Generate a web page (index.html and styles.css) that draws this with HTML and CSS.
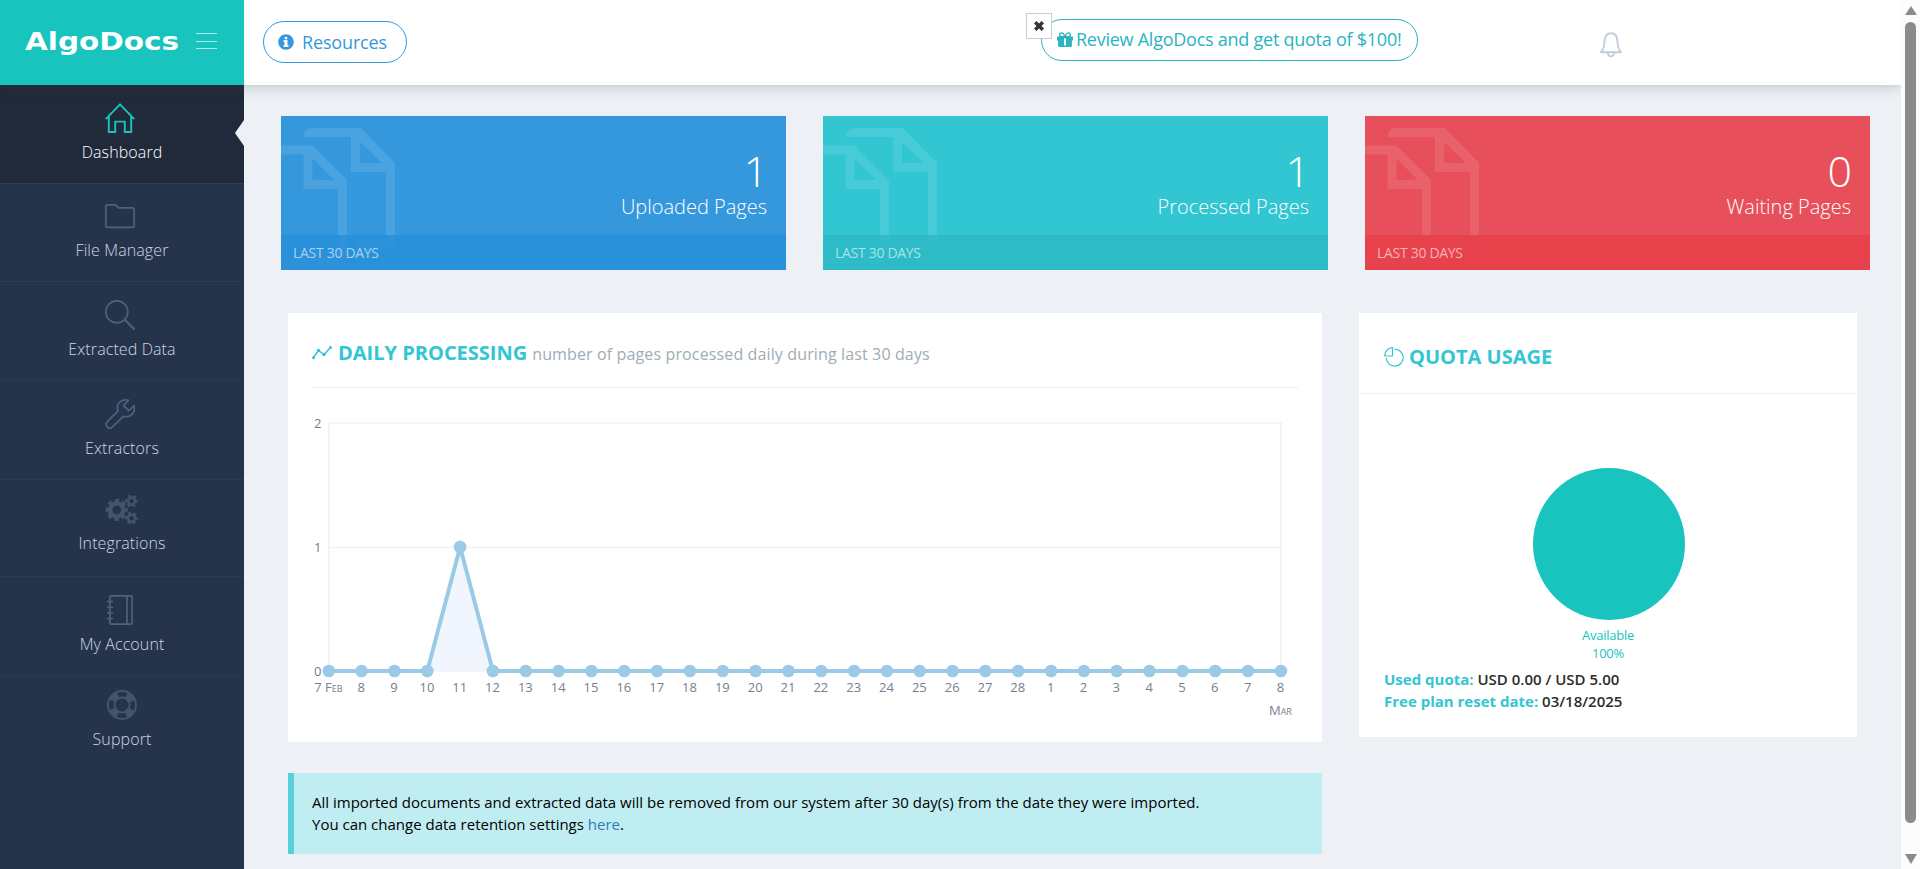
FILE: index.html
```html
<!DOCTYPE html>
<html lang="en">
<head>
<meta charset="utf-8">
<title>AlgoDocs - Dashboard</title>
<link rel="stylesheet" href="styles.css">
</head>
<body>
<svg class="defs" width="0" height="0">
  <symbol id="docs" viewBox="0 0 114 154">
    <path fill-rule="evenodd" d="M0 29.5H31.5L66 64V142Q66 151 57 151H0V142H53Q57 142 57 138V73H22.5V38.5H0ZM31.5 42.5V64H53ZM22.5 21Q22.5 12 31.5 12H80L114 47V125Q114 134 105 134H74.5V125H101Q105 125 105 121V56H70V21H22.5ZM79 26V47H101Z"/>
  </symbol>
</svg>
<div class="app">
  <div class="page">
    <header class="header">
      <div class="brand">
        <svg class="logo" width="156" height="30" viewBox="0 0 156 30"><text x="1" y="24" textLength="154" lengthAdjust="spacingAndGlyphs">AlgoDocs</text></svg>
        <div class="toggler"><span></span><span></span><span></span></div>
      </div>
      <div class="topbar">
        <a class="pill pill-blue">
          <svg width="16" height="16" viewBox="0 0 512 512"><path fill="currentColor" d="M256 8C119.043 8 8 119.083 8 256c0 136.997 111.043 248 248 248s248-111.003 248-248C504 119.083 392.957 8 256 8zm0 80c26 0 46 18 46 42s-20 42-46 42-46-18-46-42 20-42 46-42zm80 310c0 9-7 16-16 16H192c-9 0-16-7-16-16v-34c0-9 7-16 16-16h16V258h-16c-9 0-16-7-16-16v-34c0-9 7-16 16-16h96c9 0 16 7 16 16v140h16c9 0 16 7 16 16v34z"/></svg>
          <span>Resources</span>
        </a>
        <div class="promo">
          <a class="pill pill-teal">
            <svg width="16" height="15" viewBox="0 0 16 15"><path fill="currentColor" fill-rule="evenodd" d="M.500 4.500H15.500Q16 4.500 16 5V8.500H14.900V13.800Q14.900 15 13.700 15H2.300Q1.100 15 1.100 13.800V8.500H0V5Q0 4.500.500 4.500ZM7 6.500V13.500H9V6.500Z"/><path fill="none" stroke="currentColor" stroke-width="1.400" d="M8 4.800C7 2 5.800.900 4.600.900A1.900 1.900 0 0 0 4.600 4.800ZM8 4.800C9 2 10.200.900 11.400.900A1.900 1.900 0 0 1 11.400 4.800Z"/></svg>
            <span>Review AlgoDocs and get quota of $100!</span>
          </a>
          <button class="close"><svg width="12" height="12" viewBox="0 0 12 12"><path d="M2.200 2.200 9.800 9.800M9.800 2.200 2.200 9.800"/></svg></button>
        </div>
        <svg class="bell" width="24" height="26" viewBox="0 0 24 26"><path d="M2.200 19.600C5 17.600 5.300 14 5.500 9.500C5.700 4.500 8 1.200 12 1.200S18.300 4.500 18.500 9.500C18.700 14 19 17.600 21.800 19.600Q22.300 20.300 21.500 20.300H2.500Q1.700 20.300 2.200 19.600ZM9 20.500C9 23 10.300 24.300 12 24.300S15 23 15 20.500"/></svg>
      </div>
    </header>

    <div class="body">
      <nav class="sidebar">
        <a class="item active"><svg width="30" height="30" viewBox="0 0 30 30"><path stroke-width="1.900" d="M.800 16.200 15 1.400 29.200 16.200M3.800 13.500V29H10.200V18.600H19.800V29H26.200V13.500"/></svg><span>Dashboard</span></a>
        <a class="item folder"><svg width="30" height="30" viewBox="0 0 30 30"><path stroke-width="1.700" d="M2.500 3.800H10.500L13.500 6.800H27.800Q29.200 6.800 29.200 8.200V25Q29.200 26.400 27.800 26.400H2.200Q.800 26.400.800 25V5.200Q.800 3.800 2.500 3.800Z"/></svg><span>File Manager</span></a>
        <a class="item"><svg width="30" height="30" viewBox="0 0 30 30"><circle cx="11.800" cy="11.800" r="11" stroke-width="1.700"/><path stroke-width="2" d="M19.800 19.800 29.500 29.500"/></svg><span>Extracted Data</span></a>
        <a class="item"><svg width="30" height="30" viewBox="0 0 30 30"><path stroke-width="1.700" stroke-linejoin="round" d="M23.600 1.300C16.500-.600 10.500 4.500 13 11.800L1.900 23.200C-.600 26 3.500 31.300 7 28.300L18.500 17.200C25.500 19.500 30.800 13.500 29.200 6.600L23.800 11.700 18.400 6.400Z"/></svg><span>Extractors</span></a>
        <a class="item solid"><svg width="34" height="30" viewBox="0 0 34 30">
          <circle cx="11.700" cy="14.800" r="6.600" stroke-width="4.400"/><circle cx="11.700" cy="14.800" r="9.500" stroke-width="3.200" stroke-dasharray="4.300 3.161" stroke-dashoffset="2.150"/>
          <circle cx="26.500" cy="6" r="3.500" stroke-width="2.500"/><circle cx="26.500" cy="6" r="5.300" stroke-width="2.400" stroke-dasharray="2.900 2.650" stroke-dashoffset="1.450"/>
          <circle cx="26.500" cy="23.200" r="3.500" stroke-width="2.500"/><circle cx="26.500" cy="23.200" r="5.300" stroke-width="2.400" stroke-dasharray="2.900 2.650" stroke-dashoffset="1.450"/></svg><span>Integrations</span></a>
        <a class="item"><svg width="30" height="30" viewBox="0 0 30 30"><rect x="4.900" y=".800" width="22.200" height="28.400" rx="1.500" stroke-width="1.700"/><path stroke-width="1.700" d="M22 .800V29.200"/><path stroke-width="1.500" d="M2 6.500H8M2 12.300H8M2 18H8M2 23.500H8"/></svg><span>My Account</span></a>
        <a class="item solid last"><svg width="30" height="30" viewBox="0 0 30 30"><circle cx="15" cy="15" r="14" stroke-width="2"/><circle cx="15" cy="15" r="7.500" stroke-width="2"/><circle cx="15" cy="15" r="10.800" stroke-width="6" stroke-dasharray="8.300 8.665" stroke-dashoffset="4.150" transform="rotate(45 15 15)"/></svg><span>Support</span></a>
      </nav>

      <main class="content">
        <section class="stats">
          <div class="stat blue"><svg class="stat-icon" width="114" height="154"><use href="#docs"/></svg><div class="details"><div class="number">1</div><div class="desc">Uploaded Pages</div></div><div class="more">LAST 30 DAYS</div></div>
          <div class="stat teal"><svg class="stat-icon" width="114" height="154"><use href="#docs"/></svg><div class="details"><div class="number">1</div><div class="desc">Processed Pages</div></div><div class="more">LAST 30 DAYS</div></div>
          <div class="stat red"><svg class="stat-icon" width="114" height="154"><use href="#docs"/></svg><div class="details"><div class="number">0</div><div class="desc">Waiting Pages</div></div><div class="more">LAST 30 DAYS</div></div>
        </section>

        <section class="columns">
          <div class="left">
            <div class="panel daily">
              <div class="daily-title">
                <svg width="20" height="14" viewBox="0 0 20 14"><path fill="none" stroke="currentColor" stroke-width="1.500" d="M1.500 11.500 6.500 4.500 12 8.500 18.500 1.500"/><g fill="currentColor"><circle cx="1.500" cy="11.700" r="1.500"/><circle cx="6.500" cy="4.500" r="1.700"/><circle cx="12" cy="8.500" r="1.700"/><circle cx="18.500" cy="1.600" r="1.500"/></g></svg>
                <h2>DAILY PROCESSING</h2><small>number of pages processed daily during last 30 days</small>
              </div>
              <div class="chart">
                <div class="y-axis"><span>2</span><span>1</span><span>0</span></div>
                <div class="plot">
                  <svg width="970" height="270" viewBox="0 0 970 270">
                    <defs><marker id="dot" markerUnits="userSpaceOnUse" markerWidth="14" markerHeight="14" refX="7" refY="7"><circle cx="7" cy="7" r="6.300" fill="#9acae6"/></marker></defs>
                    <path fill="none" stroke="#f2f2f2" stroke-width="1.500" d="M8.800 13H961V261H8.800ZM8.800 137.500H961"/>
                    <path fill="#f1f6fe" d="M107.300 261 140.100 137 172.900 261Z"/>
                    <polyline class="series" points="8.800,261 41.600,261 74.500,261 107.300,261 140.100,137 172.900,261 205.800,261 238.600,261 271.400,261 304.300,261 337.100,261 369.900,261 402.800,261 435.600,261 468.400,261 501.200,261 534.100,261 566.900,261 599.700,261 632.600,261 665.400,261 698.200,261 731.100,261 763.900,261 796.700,261 829.500,261 862.400,261 895.200,261 928,261 960.900,261"/>
                  </svg>
                  <div class="x-axis"><span>7 Feb</span><span>8</span><span>9</span><span>10</span><span>11</span><span>12</span><span>13</span><span>14</span><span>15</span><span>16</span><span>17</span><span>18</span><span>19</span><span>20</span><span>21</span><span>22</span><span>23</span><span>24</span><span>25</span><span>26</span><span>27</span><span>28</span><span>1</span><span>2</span><span>3</span><span>4</span><span>5</span><span>6</span><span>7</span><span>8<br>Mar</span></div>
                </div>
              </div>
            </div>
            <div class="note">All imported documents and extracted data will be removed from our system after 30 day(s) from the date they were imported.<br>You can change data retention settings <a>here</a>.</div>
          </div>

          <div class="panel quota">
            <div class="quota-title">
              <svg width="20" height="20" viewBox="0 0 20 20"><path fill="none" stroke="currentColor" stroke-width="1.200" d="M8.500.700V9H.700A8 8 0 0 1 8.500.700ZM10.500 2.200A8.500 8.500 0 1 1 2.200 11"/></svg>
              <h2>QUOTA USAGE</h2>
            </div>
            <div class="pie-area"><div class="pie"></div><div class="pie-label">Available<br>100%</div></div>
            <div class="quota-text"><div><b>Used quota:</b> USD 0.00 / USD 5.00</div><div><b>Free plan reset date:</b> 03/18/2025</div></div>
          </div>
        </section>
      </main>
    </div>
  </div>
  <div class="scrollbar"><i class="up"></i><div class="thumb"></div><i class="down"></i></div>
</div>
</body>
</html>
```
FILE: styles.css
```css
* { box-sizing: border-box; }
body { margin: 0; font-family: "Open Sans", sans-serif; background: #edf1f6; color: #333; overflow: hidden; }
.defs { display: block; }
.app { display: flex; height: 869px; overflow: hidden; }
.page { flex: 1; display: flex; flex-direction: column; overflow: hidden; }

.header { display: flex; height: 85px; flex: none; position: relative; z-index: 2; background: #fff; box-shadow: 0 1px 13px 0 rgba(50, 60, 50, .28); }
.brand { width: 244px; background: #18c4bd; display: flex; align-items: center; padding: 0 27px 3px 24px; justify-content: space-between; }
.logo text { font: bold 24px "DejaVu Sans", sans-serif; fill: #fff; }
.toggler { width: 21px; height: 16px; display: flex; flex-direction: column; justify-content: space-between; }
.toggler span { height: 1px; background: #b0ebe8; }
.topbar { flex: 1; display: flex; align-items: flex-start; padding-left: 19px; }
.pill { display: flex; align-items: center; height: 42px; border: 1px solid; border-radius: 21px; font-size: 18px; line-height: 40px; white-space: nowrap; }
.pill-blue { margin-top: 21px; width: 144px; color: #3598dc; padding-left: 14px; gap: 8px; letter-spacing: -.15px; }
.promo { position: relative; margin: 19px 0 0 634px; }
.pill-teal { width: 377px; color: #2ab4c0; padding: 0 0 2px 15px; gap: 3px; letter-spacing: -.25px; }
.close { position: absolute; left: -15px; top: -6px; width: 26px; height: 26px; padding: 0; background: #fff; border: 1px solid #ccc; display: flex; align-items: center; justify-content: center; }
.close path { stroke: #333; stroke-width: 3.4; }
.bell { margin: 32px 0 0 181px; fill: none; stroke: #c0cddc; stroke-width: 1.9; }

.body { flex: 1; display: flex; min-height: 0; }
.sidebar { width: 244px; background: #26344b; }
.item { display: flex; flex-direction: column; align-items: center; height: 99px; padding-top: 18px; border-bottom: 1px solid #2c3c58; font-size: 16px; font-weight: 300; line-height: 24px; letter-spacing: .1px; color: #ccd6e6; position: relative; }
.item svg { margin: 0 4px 7px 0; fill: none; stroke: #4f6080; flex: none; }
.item.active { background: #202a3b; color: #fff; }
.item.active svg { stroke: #18c4bd; }
.item.active::after { content: ""; position: absolute; right: 0; top: 35px; border: 13px solid transparent; border-left-width: 0; border-right: 9px solid #edf1f6; }
.item.folder { height: 98px; padding-top: 17px; }
.item.solid { height: 97px; padding-top: 15px; }
.item.solid svg { margin: 0 0 6px; stroke: #44546f; }
.item.last { border: 0; padding-top: 14px; }
.item.last svg { margin-bottom: 7px; }

.content { flex: 1; padding: 31px 31px 0 37px; }
.stats { display: grid; grid-template-columns: repeat(3, 505px); gap: 37px; }
.stat { height: 154px; display: grid; grid-template: 119px 35px / 1fr; overflow: hidden; color: #fff; font-weight: 300; }
.stat-icon { grid-area: 1 / 1 / 3 / 2; fill: #fff; opacity: .1; }
.details { grid-area: 1 / 1; padding: 32px 19px 0 0; text-align: right; }
.number { font-size: 43px; line-height: 46px; letter-spacing: -1px; }
.desc { font-size: 20px; line-height: 26px; }
.more { grid-area: 2 / 1; position: relative; z-index: 1; padding-left: 12px; font-size: 14px; font-weight: 400; line-height: 36px; letter-spacing: -.3px; color: rgba(255, 255, 255, .6); }
.blue { background: #3598dc; } .blue .more { background: rgba(39, 143, 217, .8); }
.teal { background: #32c5d2; } .teal .more { background: rgba(44, 184, 198, .85); }
.red { background: #e7505a; } .red .more { background: rgba(230, 62, 73, .85); }

.columns { display: flex; align-items: flex-start; gap: 37px; padding: 43px 0 0 7px; }
.left { width: 1034px; }
.panel { background: #fff; }
.panel h2 { margin: 0; font-size: 20px; font-weight: 700; line-height: 28px; color: #32c5d2; }
.daily { height: 429px; padding: 0 24px; }
.daily-title { display: flex; align-items: baseline; height: 75px; padding-top: 26px; border-bottom: 1px solid #eee; color: #32c5d2; white-space: nowrap; }
.panel .daily-title h2 { margin: 0 5px 0 6px; }
.daily-title small { font-size: 16px; letter-spacing: .13px; color: #9eacb4; }
.chart { display: flex; padding-top: 22px; font-size: 13px; color: #76808f; }
.y-axis { width: 6px; height: 270px; display: flex; flex-direction: column; justify-content: space-between; line-height: 18px; padding-top: 4px; margin-left: 2px; }
.plot svg { display: block; overflow: visible; }
.series { fill: none; stroke: #9acae6; stroke-width: 4; marker-start: url(#dot); marker-mid: url(#dot); marker-end: url(#dot); }
.x-axis { display: grid; grid-template-columns: repeat(30, 32.83px); margin: -4px 0 0 -8px; text-align: center; line-height: 23px; font-variant: small-caps; white-space: nowrap; }
.note { margin-top: 31px; height: 81px; background: #c0edf1; border-left: 6px solid #58d0da; padding: 18px 18px; font-size: 15px; line-height: 22px; color: #000; white-space: nowrap; }
.note a { color: #337ab7; }

.quota { width: 498px; height: 424px; }
.quota-title { display: flex; align-items: center; gap: 5px; height: 81px; padding: 8px 0 0 25px; border-bottom: 1px solid #eee; color: #32c5d2; }
.pie-area { height: 274px; padding-top: 74px; display: flex; flex-direction: column; align-items: center; }
.pie { width: 152px; height: 152px; border-radius: 50%; background: #18c4bd; margin-left: 2px; flex: none; }
.pie-label { margin-top: 6px; font-size: 13px; line-height: 18px; letter-spacing: -.25px; text-align: center; color: #18c4bd; }
.quota-text { padding: 0 25px; font-size: 15px; font-weight: 600; line-height: 22px; color: #2c2c2c; }
.quota-text b { font-weight: 700; color: #32c5d2; }

.scrollbar { width: 19px; background: #fcfcfc; display: flex; flex-direction: column; align-items: center; padding: 6px 0 5px 0; }
.up, .down { border: 6px solid transparent; height: 0; }
.up { border-top: 0; border-bottom: 9px solid #8b8b8b; }
.down { border-bottom: 0; border-top: 10px solid #8b8b8b; margin-top: auto; }
.thumb { width: 11px; height: 801px; margin-top: 7px; border-radius: 6px; background: #8b8b8b; }
```
